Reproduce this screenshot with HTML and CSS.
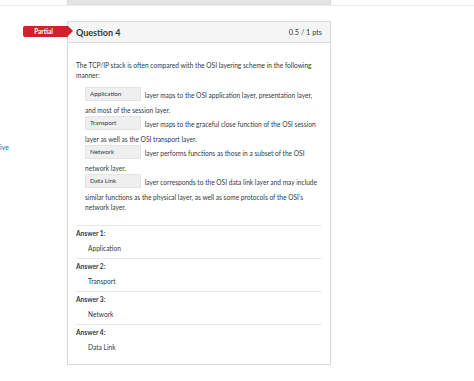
FILE: index.html
```html
<!DOCTYPE html>
<html lang="en">
  <head>
    <meta charset="UTF-8" />
    <title>Question 4</title>
    <link rel="stylesheet" href="styles.css">
  </head>
  <body>
    <div class="top-rule">
      <div class="prev-box"></div>
    </div>

    <div class="page">
      <aside class="sidebar">
        <a href="#" class="side-link">ive</a>
      </aside>

      <main class="main">
        <div class="question">
          <span class="badge">Partial</span>
          <div class="question-header">
            <span class="question-name">Question 4</span>
            <span class="question-pts">0.5 / 1 pts</span>
          </div>

          <div class="question-body">
            <p class="lead">The TCP/IP stack is often compared with the OSI layering scheme in the following manner:</p>

            <p class="blank-line"><span class="blank">Application</span> layer maps to the OSI application layer, presentation layer, and most of the session layer.</p>
            <p class="blank-line"><span class="blank">Transport</span> layer maps to the graceful close function of the OSI session layer as well as the OSI transport layer.</p>
            <p class="blank-line"><span class="blank">Network</span> layer performs functions as those in a subset of the OSI network layer.</p>
            <p class="blank-line"><span class="blank">Data Link</span> layer corresponds to the OSI data link layer and may include similar functions as the physical layer, as well as some protocols of the OSI's network layer.</p>

            <div class="answers">
              <div class="answer">
                <div class="answer-label">Answer 1:</div>
                <div class="answer-value">Application</div>
              </div>
              <div class="answer">
                <div class="answer-label">Answer 2:</div>
                <div class="answer-value">Transport</div>
              </div>
              <div class="answer">
                <div class="answer-label">Answer 3:</div>
                <div class="answer-value">Network</div>
              </div>
              <div class="answer">
                <div class="answer-label">Answer 4:</div>
                <div class="answer-value">Data Link</div>
              </div>
            </div>
          </div>
        </div>
      </main>
    </div>
  </body>
</html>
```

FILE: styles.css
```css
*,
*::after,
*::before {
  margin: 0;
  padding: 0;
  box-sizing: border-box;
}

html {
  font-family: Lato, "Open Sans", sans-serif;
  color: #2d3b45;
}

body {
  background: #fff;
}

/* bottom edge of the previous question */
.top-rule {
  height: 6px;
  border-bottom: 1px solid #ececec;
  padding-left: 67px;
}

.prev-box {
  width: 264px;
  height: 5px;
  background: #e4e4e4;
  border-left: 1px solid #d9d9d9;
  border-right: 1px solid #d9d9d9;
}

.page {
  display: flex;
}

.sidebar {
  width: 67px;
  padding-top: 128px;
}

.side-link {
  font-size: 7px;
  color: #0a78c0;
  text-decoration: none;
}

.main {
  width: 264px;
  padding-top: 15px;
}

.question {
  position: relative;
  border: 1px solid #d9d9d9;
  box-shadow: 0 1px 2px rgba(0, 0, 0, 0.06);
}

.badge {
  position: absolute;
  left: -45px;
  top: 4px;
  width: 45px;
  height: 11px;
  background: #d0222e;
  color: #fff;
  font-size: 6.5px;
  font-weight: 700;
  line-height: 11px;
  text-align: center;
  padding-right: 4px;
  border-radius: 2px 0 0 2px;
}

.badge::after {
  content: "";
  position: absolute;
  right: -5px;
  top: 0;
  border-top: 5.5px solid transparent;
  border-bottom: 5.5px solid transparent;
  border-left: 5px solid #d0222e;
}

.question-header {
  display: flex;
  justify-content: space-between;
  align-items: center;
  height: 21px;
  padding: 0 8px;
  background: #f5f5f5;
  border-bottom: 1px solid #d9d9d9;
}

.question-name {
  font-size: 9px;
  font-weight: 700;
}

.question-pts {
  font-size: 7.3px;
}

.question-body {
  padding: 17px 8px 12px;
  font-size: 6.6px;
  line-height: 10px;
}

.lead {
  margin-bottom: 6px;
}

.blank-line {
  padding-left: 9px;
}

/* answered blank sits on the text line, bottom near the descenders */
.blank {
  display: inline-block;
  width: 56px;
  height: 14px;
  margin: 1px 2px 4px 0;
  padding: 2px 4px;
  vertical-align: -7.5px;
  overflow: hidden;
  background: #efefef;
  border: 1px solid #e4e4e4;
  font-size: 6.3px;
  line-height: 7px;
}

.answers {
  margin-top: 13px;
}

.answer {
  border-top: 1px solid #e8e8e8;
  padding: 2px 0 5px;
}

.answer-label {
  font-weight: 700;
}

.answer-value {
  margin-top: 5px;
  padding-left: 12px;
}

.answer:last-child {
  padding-bottom: 0;
}
```
